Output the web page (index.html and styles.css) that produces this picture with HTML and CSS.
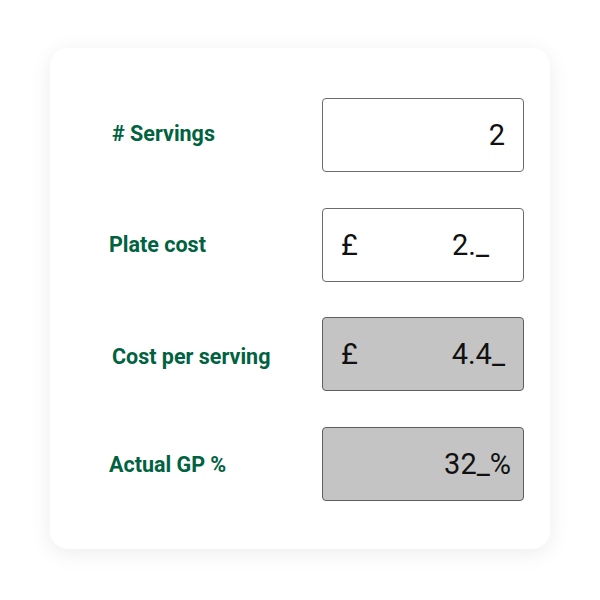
FILE: index.html
```html
<!DOCTYPE html>
<html>
<head>
<meta charset="utf-8">
<link rel="stylesheet" href="styles.css">
</head>
<body>
<div class="page">
  <div class="card">
    <div class="row">
      <div class="label l-a">#&nbsp;Servings</div>
      <div class="field"><span class="val">2</span></div>
    </div>
    <div class="row">
      <div class="label l-b">Plate cost</div>
      <div class="field"><span class="cur">£</span><span class="val v-plate">2._</span></div>
    </div>
    <div class="row">
      <div class="label l-c">Cost per serving</div>
      <div class="field calc"><span class="cur">£</span><span class="val">4.4_</span></div>
    </div>
    <div class="row">
      <div class="label l-d">Actual GP %</div>
      <div class="field calc"><span class="val v-gp">32_%</span></div>
    </div>
  </div>
</div>
</body>
</html>
```

FILE: styles.css
```css
html, body {
  margin: 0;
  padding: 0;
  background: #ffffff;
}
.page {
  width: 600px;
  height: 600px;
  padding: 48px 50px;
  box-sizing: border-box;
}
.card {
  width: 500px;
  height: 501px;
  background: #ffffff;
  border-radius: 18px;
  box-shadow: 0 4px 22px rgba(0, 0, 0, 0.08);
  padding: 50px 26px 0 0;
  box-sizing: border-box;
  display: flex;
  flex-direction: column;
  gap: 35.5px;
}
.row {
  display: flex;
  align-items: center;
  justify-content: space-between;
  height: 74px;
}
.label {
  font-family: Roboto, "Liberation Sans", sans-serif;
  font-weight: 700;
  font-size: 21.5px;
  color: #00623f;
  white-space: nowrap;
}
.l-a { margin-left: 62px; margin-top: -3px; }
.l-b { margin-left: 59px; margin-top: -1px; }
.l-c { margin-left: 62px; margin-top: 5px; }
.l-d { margin-left: 59px; margin-top: 2px; }
.field {
  width: 202px;
  height: 74px;
  box-sizing: border-box;
  border: 1px solid #6b6b6b;
  border-radius: 4px;
  background: #ffffff;
  display: flex;
  align-items: center;
  padding: 0 18px 0 18px;
  font-family: Roboto, "Liberation Sans", sans-serif;
  font-size: 29px;
  color: #111111;
}
.field.calc {
  background: #c4c4c4;
  border-color: #5e5e5e;
}
.cur {
  margin-right: auto;
}
.val {
  margin-left: auto;
}
.v-plate { margin-right: 16px; }
.v-gp { margin-right: -6px; }
```
